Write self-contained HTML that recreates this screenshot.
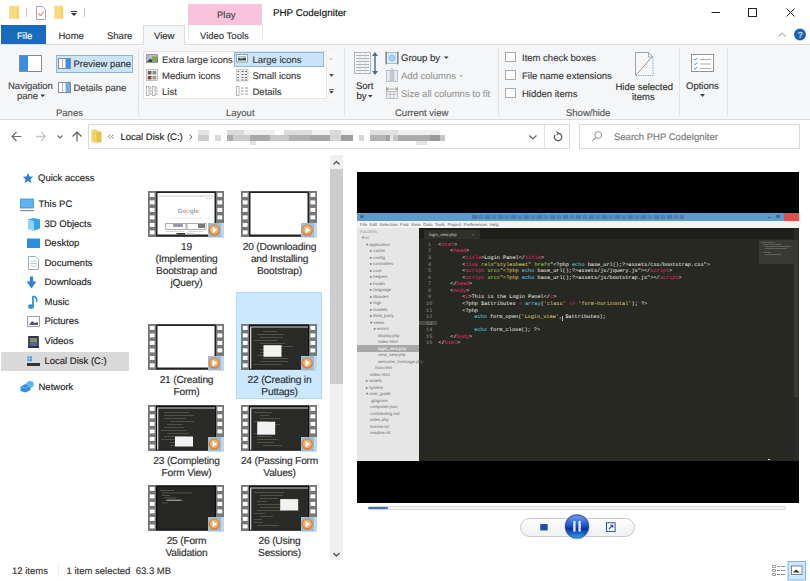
<!DOCTYPE html>
<html><head><meta charset="utf-8">
<style>
html,body{margin:0;padding:0;}
body{width:810px;height:581px;overflow:hidden;position:relative;background:#fff;font-family:"Liberation Sans",sans-serif;font-size:9.5px;color:#222;text-rendering:geometricPrecision;}
.a{position:absolute;}
.t{position:absolute;white-space:nowrap;line-height:12px;font-size:9.5px;color:#3a3a3a;-webkit-text-stroke:0.15px currentColor;margin-top:0.9px;}
.g{color:#9a9a9a;}
svg{position:absolute;overflow:visible;}
</style></head><body>

<!-- ===== Title bar ===== -->
<svg style="left:0;top:0" width="810" height="25">
  <!-- QAT folder 1 -->
  <rect x="9.2" y="5.8" width="10" height="13" fill="#f7db7c"/><path d="M17.5 9v9.8" stroke="#e9c860" stroke-width="1"/>
  <rect x="26" y="8" width="1" height="9" fill="#c8c8c8"/>
  <!-- doc with check -->
  <path d="M36.5 6.5h6l3 3v10h-9z" fill="#fff" stroke="#9a9aa8" stroke-width="0.9"/>
  <path d="M38.5 13.5l2 2 3.5-4" fill="none" stroke="#d88070" stroke-width="1.1"/>
  <rect x="54.3" y="5.8" width="9" height="13" fill="#f7db7c"/><path d="M62 9v9.8" stroke="#e9c860" stroke-width="1"/>
  <rect x="71" y="11" width="6" height="1" fill="#333"/><path d="M71 13h6l-3 3z" fill="#333"/>
  <rect x="84" y="8" width="1" height="9" fill="#c8c8c8"/>
  <!-- window controls -->
  <rect x="711.5" y="12" width="8.5" height="1" fill="#222"/>
  <rect x="748.5" y="8.5" width="8" height="8" fill="none" stroke="#222" stroke-width="1"/>
  <path d="M786.5 8.5l8 8M794.5 8.5l-8 8" stroke="#222" stroke-width="1"/>
</svg>
<div class="t" style="left:273px;top:7px;font-size:9.8px;color:#111">PHP CodeIgniter</div>

<!-- Play contextual header -->
<div class="a" style="left:188px;top:4px;width:74px;height:21px;background:#f8c4dc"></div>
<div class="t" style="left:217px;top:9px;color:#444">Play</div>
<div class="a" style="left:188px;top:25px;width:73px;height:14px;border-left:1px solid #f3e4ea;border-right:1px solid #f3e4ea;background:#fff"></div>

<!-- ===== Tabs ===== -->
<div class="a" style="left:1px;top:25px;width:45px;height:19px;background:#1a6bbd"></div>
<div class="t" style="left:17px;top:30px;color:#fff">File</div>
<div class="t" style="left:58.5px;top:30px;color:#333">Home</div>
<div class="t" style="left:107px;top:30px;color:#333">Share</div>
<div class="a" style="left:143px;top:25px;width:42px;height:20px;background:#f5f6f7;border:1px solid #dadbdc;border-bottom:none;box-sizing:border-box"></div>
<div class="t" style="left:154px;top:30px;color:#333">View</div>
<div class="t" style="left:200px;top:30px;color:#333">Video Tools</div>

<!-- chevron + help -->
<svg style="left:0;top:0" width="810" height="45">
  <path d="M778.5 36.5l3.5-3.5 3.5 3.5" fill="none" stroke="#b5b5b5" stroke-width="1.2"/>
  <circle cx="800" cy="34.5" r="5.9" fill="#1a62b0"/>
  <text x="800.2" y="38" font-family="Liberation Sans" font-weight="bold" font-size="9" fill="#bfe0ff" text-anchor="middle">?</text>
</svg>

<!-- ===== Ribbon ===== -->
<div class="a" style="left:0;top:44px;width:810px;height:76px;background:#f5f6f7;border-top:1px solid #dadbdc;border-bottom:1px solid #dadbdc;box-sizing:border-box"></div>
<!-- restore view tab bottom -->
<div class="a" style="left:144px;top:44px;width:40px;height:1px;background:#f5f6f7"></div>
<!-- separators -->
<div class="a" style="left:138px;top:48px;width:1px;height:68px;background:#e2e3e4"></div>
<div class="a" style="left:344px;top:48px;width:1px;height:68px;background:#e2e3e4"></div>
<div class="a" style="left:498px;top:48px;width:1px;height:68px;background:#e2e3e4"></div>
<div class="a" style="left:679px;top:48px;width:1px;height:68px;background:#e2e3e4"></div>
<div class="a" style="left:727px;top:48px;width:1px;height:68px;background:#e2e3e4"></div>

<!-- Panes group -->
<svg style="left:0;top:0" width="140" height="120">
  <rect x="19.5" y="55.5" width="22" height="16" fill="#fff" stroke="#8a8a8a"/>
  <rect x="20" y="56" width="8" height="15" fill="#3c8fdf"/>
  <rect x="56.5" y="55.5" width="76" height="17" fill="#cce4f7" stroke="#8db4da"/>
  <rect x="58.5" y="58.5" width="12" height="10" fill="#fff" stroke="#8a8a8a"/>
  <rect x="65.5" y="59" width="4.5" height="9" fill="#3c8fdf"/><path d="M62.5 59v9" stroke="#aaa" stroke-width="0.8"/>
  <rect x="58.5" y="82.5" width="12" height="10" fill="#fff" stroke="#8a8a8a"/>
  <rect x="65.5" y="83" width="4.5" height="9" fill="#6aaee8"/><path d="M62.5 83v9" stroke="#aaa" stroke-width="0.8"/>
  <path d="M40.5 94.5h4.5l-2.25 2.7z" fill="#333"/>
</svg>
<div class="t" style="left:8px;top:79.8px;color:#444">Navigation</div>
<div class="t" style="left:17px;top:90.3px;color:#444">pane</div>
<div class="t" style="left:73.5px;top:58px;color:#333">Preview pane</div>
<div class="t" style="left:73.5px;top:82px;color:#444">Details pane</div>
<div class="t" style="left:56px;top:106.8px;color:#555">Panes</div>

<!-- Layout group -->
<div class="a" style="left:143px;top:51px;width:193px;height:48px;background:#fff;border:1px solid #e3e4e5;box-sizing:border-box"></div>
<div class="a" style="left:325.5px;top:51px;width:10.5px;height:48px;background:#f8f8f8;border-left:1px solid #e7e7e7;box-sizing:border-box"></div>
<div class="a" style="left:233.5px;top:51.5px;width:90px;height:15px;background:#cce4f7;border:1px solid #8db4da;box-sizing:border-box"></div>
<svg style="left:0;top:0" width="345" height="120">
  <rect x="146.5" y="54.5" width="11" height="8" fill="#b9bccf" stroke="#8a8a8a" stroke-width="0.8"/>
  <path d="M147 62l3-3.5 3 2 4.5-3v4.5z" fill="#3f4a3a"/><rect x="152" y="56.5" width="5" height="5.5" fill="#7fa84a"/>
  <rect x="146.5" y="69.5" width="11" height="11" fill="#ececea" stroke="#aaa" stroke-width="0.7"/>
  <rect x="147.8" y="71" width="3.6" height="3.4" fill="#6a625a"/><rect x="152.6" y="71" width="3.6" height="3.4" fill="#8a8a80"/>
  <rect x="147.8" y="76" width="3.6" height="3.4" fill="#7a4a3a"/><rect x="152.6" y="76" width="3.6" height="3.4" fill="#9a9a88"/>
  <rect x="146.5" y="86.5" width="2.5" height="9" fill="none" stroke="#999" stroke-width="0.7"/>
  <rect x="152.5" y="86.5" width="2.5" height="9" fill="none" stroke="#999" stroke-width="0.7"/>
  <path d="M149.5 88h2M149.5 91h2M149.5 94h2M155.5 88h2M155.5 91h2M155.5 94h2" stroke="#777" stroke-width="0.8"/>
  <rect x="236.5" y="54.5" width="11" height="7.5" fill="#fff" stroke="#8a8a8a" stroke-width="0.8"/>
  <path d="M238 60.5v-3l3 1 5-1v3z" fill="#2f4f5a"/><rect x="238" y="56" width="8" height="1.5" fill="#9fc0d0"/>
  <rect x="236.5" y="69.5" width="11.5" height="11.5" fill="#f0f0f0" stroke="#b0b0b0" stroke-width="0.6"/>
  <path d="M237.5 71.5h1.5M241.5 71.5h2M245 71.5h2M237.5 74.5h1.5M241.5 74.5h2M245 74.5h2M237.5 77.5h1.5M241.5 77.5h2M245 77.5h2M237.5 80h1.5M241.5 80h2M245 80h2" stroke="#666" stroke-width="1.1"/>
  <rect x="236.5" y="86.5" width="2.5" height="9" fill="none" stroke="#999" stroke-width="0.7"/>
  <path d="M241 88h2.5M245 88h3M241 91h2.5M245 91h3M241 94h2.5M245 94h3" stroke="#777" stroke-width="0.8"/>
  <rect x="329" y="58.5" width="4" height="1" fill="#bbb"/>
  <path d="M329.2 74h4.6l-2.3 2.8z" fill="#444"/>
  <rect x="329.2" y="89" width="4.6" height="0.9" fill="#444"/><path d="M329.2 91h4.6l-2.3 2.8z" fill="#444"/>
</svg>
<div class="t" style="left:162px;top:53.8px">Extra large icons</div>
<div class="t" style="left:162px;top:69.8px">Medium icons</div>
<div class="t" style="left:162px;top:86px">List</div>
<div class="t" style="left:252.5px;top:53.8px">Large icons</div>
<div class="t" style="left:252.5px;top:69.8px">Small icons</div>
<div class="t" style="left:252.5px;top:86px">Details</div>
<div class="t" style="left:226px;top:106.8px;color:#555">Layout</div>

<!-- Current view group -->
<svg style="left:0;top:0" width="500" height="120">
  <rect x="354.5" y="52.5" width="16" height="21" fill="#f4f6f8" stroke="#9aa" stroke-width="0.8"/>
  <path d="M356 55.5h13M356 58.5h13M356 61.5h13M356 64.5h13M356 67.5h13M356 70.5h13" stroke="#8c949a" stroke-width="0.7"/>
  <path d="M360 53v20M365 53v20" stroke="#c8cdd2" stroke-width="0.6"/>
  <path d="M375 54v19" stroke="#3d6f8f" stroke-width="1.4"/>
  <path d="M372 56l3-4 3 4zM372 71l3 4 3-4z" fill="#3d6f8f"/>
  <path d="M368 95h4.5l-2.25 2.6z" fill="#333"/>
  <rect x="386.5" y="52.5" width="11" height="11" fill="#d5e8f8" stroke="#9aa" stroke-width="0.7"/>
  <circle cx="392" cy="58" r="3" fill="#a9d0f0" stroke="#7fb3de" stroke-width="0.6"/>
  <path d="M386 51.5v13M398 51.5v13" stroke="#555" stroke-width="0.9"/>
  <rect x="386.5" y="70.5" width="11" height="11" fill="#e8ecf0" stroke="#aab" stroke-width="0.7"/>
  <path d="M390.2 70.5v11M393.8 70.5v11" stroke="#aab" stroke-width="0.7"/>
  <rect x="390.5" y="71" width="3" height="10" fill="#c0c8d0"/>
  <path d="M392 68v2" stroke="#999" stroke-width="0.8"/>
  <rect x="386.5" y="91.5" width="11" height="7" fill="#eef0f3" stroke="#aab" stroke-width="0.7"/>
  <path d="M386.5 94.5h11M390.2 91.5v7M393.8 91.5v7" stroke="#aab" stroke-width="0.6"/>
  <path d="M387 89h10M388.5 87.5l-1.5 1.5 1.5 1.5M395.5 87.5l1.5 1.5-1.5 1.5M386.5 87v4M397.5 87v4" fill="none" stroke="#777" stroke-width="0.6"/>
  <path d="M444 56.5h4.5l-2.25 2.6z" fill="#333"/>
  <path d="M459 75h4l-2 2.4z" fill="#bbb"/>
</svg>
<div class="t" style="left:356px;top:79.8px;color:#333">Sort</div>
<div class="t" style="left:356.5px;top:90.3px;color:#333">by</div>
<div class="t" style="left:401px;top:52.3px;color:#333">Group by</div>
<div class="t g" style="left:401px;top:70px">Add columns</div>
<div class="t g" style="left:401px;top:88.2px">Size all columns to fit</div>
<div class="t" style="left:395px;top:106.8px;color:#555">Current view</div>

<!-- Show/hide group -->
<div class="a" style="left:505px;top:52px;width:11px;height:10.3px;border:1px solid #aaa;background:#fff;box-sizing:border-box"></div>
<div class="a" style="left:505px;top:70px;width:11px;height:10.3px;border:1px solid #aaa;background:#fff;box-sizing:border-box"></div>
<div class="a" style="left:505px;top:87.8px;width:11px;height:10.3px;border:1px solid #aaa;background:#fff;box-sizing:border-box"></div>
<div class="t" style="left:522px;top:52.3px">Item check boxes</div>
<div class="t" style="left:522px;top:70px">File name extensions</div>
<div class="t" style="left:522px;top:88.2px">Hidden items</div>
<svg style="left:0;top:0" width="680" height="120">
  <path d="M635.5 75.5v-23h13l4.5 4.5" fill="none" stroke="#999" stroke-width="0.9"/>
  <path d="M648.5 52.5v4.5h4.5" fill="none" stroke="#999" stroke-width="0.8"/>
  <path d="M636 75l16.5-18.5" stroke="#8a8a8a" stroke-width="0.9"/>
  <path d="M653 58v17.5h-17" fill="none" stroke="#5aa7e0" stroke-width="1" stroke-dasharray="1.3 1.1"/>
</svg>
<div class="t" style="left:615.5px;top:80.8px;color:#333">Hide selected</div>
<div class="t" style="left:632px;top:90.8px;color:#333">items</div>
<div class="t" style="left:566px;top:106.8px;color:#555">Show/hide</div>

<!-- Options group -->
<svg style="left:0;top:0" width="730" height="120">
  <rect x="691.5" y="54.5" width="22" height="17" fill="#fff" stroke="#888" stroke-width="0.9"/>
  <path d="M694 59l1.2 1.2 2-2.2M694 63.5l1.2 1.2 2-2.2M694 68l1.2 1.2 2-2.2" fill="none" stroke="#2f7fd0" stroke-width="0.9"/>
  <path d="M700 59.5h11M700 64h11M700 68.5h11" stroke="#999" stroke-width="0.8"/>
  <path d="M700 94h5l-2.5 3z" fill="#444"/>
</svg>
<div class="t" style="left:686px;top:80.3px;color:#333">Options</div>

<!-- ADDRESS_ROW -->
<svg style="left:0;top:0" width="810" height="155">
  <path d="M12 136.5h9.5M16.5 132l-4.5 4.5 4.5 4.5" fill="none" stroke="#6a6a6a" stroke-width="1.15"/>
  <path d="M36 136.5h9.5M41 132l4.5 4.5-4.5 4.5" fill="none" stroke="#c8c8c8" stroke-width="1.3"/>
  <path d="M57.5 135.5l2.5 2.5 2.5-2.5" fill="none" stroke="#666" stroke-width="1.1"/>
  <path d="M77 141.5v-9.5M72.5 136.5l4.5-4.5 4.5 4.5" fill="none" stroke="#5a5a5a" stroke-width="1.15"/>
  <rect x="88.5" y="124.5" width="481" height="24" fill="#fff" stroke="#d9d9d9"/>
  <path d="M91.5 129.5h5l1 1v12h-6z" fill="#f3d46a"/><path d="M96.5 131.5h5v11h-5z" fill="#e8c250"/>
  <path d="M110.5 134.5l-2 2 2 2M113.5 134.5l-2 2 2 2" fill="none" stroke="#777" stroke-width="0.9"/>
  <path d="M189.5 134.5l2.5 2.5-2.5 2.5" fill="none" stroke="#666" stroke-width="1"/>
  <path d="M529.3 135.5l3.6 3.4 3.6-3.4" fill="none" stroke="#666" stroke-width="1.3"/>
  <rect x="544" y="125" width="1" height="23" fill="#e3e3e3"/>
  <path d="M555.2 134.6a3.7 3.7 0 1 0 3.2 -1.3" fill="none" stroke="#555" stroke-width="1.25"/>
  <path d="M556.3 131.6l2.3 1.6-1.9 2" fill="none" stroke="#555" stroke-width="1.1"/>
  <rect x="579.5" y="124.5" width="220" height="24" fill="#fff" stroke="#d9d9d9"/>
  <circle cx="598.3" cy="135" r="3.4" fill="none" stroke="#8a8a8a" stroke-width="0.95"/>
  <path d="M595.9 137.5l-3.4 3.4" stroke="#8a8a8a" stroke-width="1.05"/>
</svg>
<div class="t" style="left:120.5px;top:131px;color:#222">Local Disk (C:)</div>

<div class="t" style="left:614px;top:131px;color:#777">Search PHP CodeIgniter</div>
<!-- blurred path -->
<div class="a" style="left:0;top:0;filter:blur(0.6px)"><div class="a" style="left:198px;top:129.5px;width:11.0px;height:5.5px;background:#e4e4e4"></div><div class="a" style="left:198px;top:135px;width:11.0px;height:5.6px;background:#cdcdcd"></div><div class="a" style="left:215px;top:135px;width:6.0px;height:5.6px;background:#dadada"></div><div class="a" style="left:226.5px;top:129.5px;width:17.5px;height:5.5px;background:#dadada"></div><div class="a" style="left:244px;top:129.5px;width:31.0px;height:5.5px;background:#efefef"></div><div class="a" style="left:226.5px;top:135px;width:6.0px;height:5.6px;background:#acacac"></div><div class="a" style="left:232.5px;top:135px;width:17.5px;height:5.6px;background:#cbcbcb"></div><div class="a" style="left:250px;top:135px;width:20.0px;height:5.6px;background:#a9a9a9"></div><div class="a" style="left:270px;top:135px;width:18.8px;height:5.6px;background:#c8c8c8"></div><div class="a" style="left:250px;top:140.6px;width:6.0px;height:4.4px;background:#e2e2e2"></div><div class="a" style="left:284px;top:129.5px;width:28.0px;height:5.5px;background:#dcdcdc"></div><div class="a" style="left:312px;top:129.5px;width:18.0px;height:5.5px;background:#f0f0f0"></div><div class="a" style="left:330px;top:129.5px;width:11.0px;height:5.5px;background:#dadada"></div><div class="a" style="left:341px;top:129.5px;width:11.5px;height:5.5px;background:#f2f2f2"></div><div class="a" style="left:288.8px;top:135px;width:21.2px;height:5.6px;background:#b0b0b0"></div><div class="a" style="left:310px;top:135px;width:20.0px;height:5.6px;background:#a6a6a6"></div><div class="a" style="left:330px;top:135px;width:11.0px;height:5.6px;background:#d6d6d6"></div><div class="a" style="left:341px;top:135px;width:11.5px;height:5.6px;background:#9f9f9f"></div><div class="a" style="left:358.5px;top:134.8px;width:5.5px;height:5.9px;background:#d6d6d6"></div><div class="a" style="left:369.7px;top:129.5px;width:28.3px;height:5.3px;background:#e0e0e0"></div><div class="a" style="left:398px;top:129.5px;width:42.0px;height:5.3px;background:#efefef"></div><div class="a" style="left:369.7px;top:134.8px;width:16.3px;height:5.9px;background:#b3b3b3"></div><div class="a" style="left:386px;top:134.8px;width:4.0px;height:5.9px;background:#a3a3a3"></div><div class="a" style="left:390px;top:134.8px;width:3.0px;height:5.9px;background:#e6e6e6"></div><div class="a" style="left:393px;top:134.8px;width:5.0px;height:5.9px;background:#c6c6c6"></div><div class="a" style="left:398px;top:134.8px;width:32.0px;height:5.9px;background:#acacac"></div><div class="a" style="left:430px;top:134.8px;width:10.0px;height:5.9px;background:#9a9a9a"></div><div class="a" style="left:440px;top:134.8px;width:5.0px;height:5.9px;background:#c4c4c4"></div><div class="a" style="left:416px;top:140.7px;width:10.5px;height:4.3px;background:#e4e4e4"></div></div>

<!-- NAV_PANE -->
<div class="a" style="left:1px;top:351.5px;width:128px;height:19.5px;background:#d9d9d9"></div>
<svg style="left:0;top:0" width="135" height="400">
  <!-- star -->
  <path d="M28 173l1.6 3.4 3.6.4-2.7 2.5.8 3.6L28 181l-3.3 1.9.8-3.6-2.7-2.5 3.6-.4z" fill="#2f83d6"/>
  <!-- This PC -->
  <rect x="20.5" y="199" width="13" height="9" fill="#5fb2ee" stroke="#3a8fd4" stroke-width="0.8"/>
  <rect x="20" y="210" width="14" height="1.2" fill="#8a8a8a"/>
  <!-- 3D objects -->
  <path d="M28 219.5l6 -1.5 6 1.5v9l-6 2-6-2z" fill="#31a6e0"/><path d="M28 219.5l6 1.5v10l-6-2z" fill="#8fd3f4"/>
  <!-- desktop -->
  <rect x="27" y="238.5" width="13" height="9.5" fill="#2b8ee0"/>
  <!-- documents -->
  <path d="M28.5 256.5h7l3 3v10h-10z" fill="#fff" stroke="#8a9aa8" stroke-width="0.8"/>
  <path d="M30.5 261h6M30.5 263.5h6M30.5 266h6" stroke="#9bb" stroke-width="0.7"/>
  <!-- downloads -->
  <path d="M31.5 276.5v7" stroke="#2f83d6" stroke-width="3.2"/><path d="M26.5 281.5h10l-5 7z" fill="#2f83d6"/>
  <!-- music -->
  <path d="M33 296v10" stroke="#2f8fe0" stroke-width="1.8"/><ellipse cx="31" cy="306.5" rx="3" ry="2.3" fill="#2f8fe0"/>
  <path d="M33.5 296c2 1 4 3 3 6" fill="none" stroke="#2f8fe0" stroke-width="1.5"/>
  <!-- pictures -->
  <rect x="27.5" y="316.5" width="12" height="10" fill="#fff" stroke="#888" stroke-width="0.8"/>
  <path d="M29 325l3-4 3 2 3-1v3z" fill="#557"/>
  <!-- videos -->
  <rect x="28" y="336" width="11" height="12" fill="#2e3440"/><rect x="30" y="338" width="7" height="4" fill="#7a9070"/><rect x="30" y="342" width="7" height="4" fill="#4f6a90"/><path d="M28.8 336.5v10M38.2 336.5v10" stroke="#9aa" stroke-width="0.8" stroke-dasharray="1 1"/>
  <!-- local disk -->
  <rect x="27" y="363" width="13" height="3" fill="#333"/>
  <rect x="27.5" y="356.3" width="2" height="2.2" fill="#3a9be8"/><rect x="30" y="356.3" width="2" height="2.2" fill="#3a9be8"/><rect x="27.5" y="359.1" width="2" height="2.2" fill="#3a9be8"/><rect x="30" y="359.1" width="2" height="2.2" fill="#3a9be8"/>
  <!-- network -->
  <path d="M20.5 386.5l5-2.5 5 1.5v4.5l-5 2.5-5-1.5z" fill="#2f8fe0"/><path d="M26 383l4-2.2 3.5 1.2v4.5l-3 1.5" fill="#5ab4f2"/><path d="M20.5 386.5l5 1.5 5-2.5" fill="none" stroke="#8ccdf7" stroke-width="0.7"/>
</svg>
<div class="t" style="left:38px;top:172px;color:#1e1e1e">Quick access</div>
<div class="t" style="left:38.5px;top:198px;color:#1e1e1e">This PC</div>
<div class="t" style="left:44.5px;top:218px;color:#1e1e1e">3D Objects</div>
<div class="t" style="left:44.5px;top:237.5px;color:#1e1e1e">Desktop</div>
<div class="t" style="left:44.5px;top:257px;color:#1e1e1e">Documents</div>
<div class="t" style="left:44.5px;top:276.5px;color:#1e1e1e">Downloads</div>
<div class="t" style="left:44.5px;top:296px;color:#1e1e1e">Music</div>
<div class="t" style="left:44.5px;top:315.5px;color:#1e1e1e">Pictures</div>
<div class="t" style="left:44.5px;top:335.5px;color:#1e1e1e">Videos</div>
<div class="t" style="left:44.5px;top:355.5px;color:#1e1e1e">Local Disk (C:)</div>
<div class="t" style="left:38.5px;top:381px;color:#1e1e1e">Network</div>

<div class="a" style="left:235.5px;top:291.5px;width:86.5px;height:107.5px;background:#cce8ff;border:1px solid #b0d8f8;box-sizing:border-box"></div>
<svg style="left:147.5px;top:190.5px" width="76" height="48"><rect x="0" y="0" width="76" height="46" fill="#777777"/><rect x="1.8" y="1.9" width="4.8" height="4" fill="#fff"/><rect x="69.4" y="1.9" width="4.8" height="4" fill="#fff"/><rect x="1.8" y="9.4" width="4.8" height="4" fill="#fff"/><rect x="69.4" y="9.4" width="4.8" height="4" fill="#fff"/><rect x="1.8" y="16.9" width="4.8" height="4" fill="#fff"/><rect x="69.4" y="16.9" width="4.8" height="4" fill="#fff"/><rect x="1.8" y="24.4" width="4.8" height="4" fill="#fff"/><rect x="69.4" y="24.4" width="4.8" height="4" fill="#fff"/><rect x="1.8" y="31.9" width="4.8" height="4" fill="#fff"/><rect x="69.4" y="31.9" width="4.8" height="4" fill="#fff"/><rect x="1.8" y="39.4" width="4.8" height="4" fill="#fff"/><rect x="69.4" y="39.4" width="4.8" height="4" fill="#fff"/><rect x="8" y="0.5" width="60" height="45" fill="#222"/><rect x="9.5" y="2" width="57" height="41.5" fill="#fff"/><rect x="11" y="4.5" width="54" height="1.3" fill="#d8d8d8"/><rect x="58" y="7" width="6" height="1" fill="#ddd"/><text x="29.5" y="22.3" font-family="Liberation Sans" font-size="6.2" font-weight="bold" opacity="0.75"><tspan fill="#4a7fd8">G</tspan><tspan fill="#e05a4a">o</tspan><tspan fill="#e9b83a">o</tspan><tspan fill="#4a7fd8">g</tspan><tspan fill="#3ea35a">l</tspan><tspan fill="#e05a4a">e</tspan></text><rect x="23" y="26.5" width="32" height="1" fill="#eee"/><rect x="17.8" y="32.4" width="20.2" height="6.2" fill="#fff" stroke="#777" stroke-width="0.6"/><rect x="39" y="32.4" width="19" height="6.2" fill="#fff" stroke="#777" stroke-width="0.6"/><rect x="25" y="33" width="10" height="3" fill="#9a9aa8"/><rect x="50" y="33" width="7" height="4" fill="#777"/><rect x="18" y="40" width="18" height="0.8" fill="#ccc"/><rect x="40" y="40" width="16" height="0.8" fill="#ccc"/><rect x="28.5" y="42" width="8.5" height="1.5" fill="#333"/><rect x="38" y="42" width="8" height="1.5" fill="#bcd"/><rect x="60" y="32" width="16" height="14.5" fill="#9fbcd2"/><rect x="73" y="32" width="3" height="14.5" fill="#bcd8ee"/><circle cx="66.3" cy="39.2" r="5.6" fill="#d9833a"/><circle cx="66.3" cy="38.8" r="4.3" fill="#f2b070"/><path d="M64.6 36l4.6 3.1-4.6 3.1z" fill="#fff"/></svg>
<div class="t lab" style="left:136.5px;top:240.9px;width:100px;text-align:center;font-size:10.2px;letter-spacing:-0.2px;color:#2e2e2e">19</div>
<div class="t lab" style="left:136.5px;top:253.1px;width:100px;text-align:center;font-size:10.2px;letter-spacing:-0.2px;color:#2e2e2e">(Implementing</div>
<div class="t lab" style="left:136.5px;top:265.3px;width:100px;text-align:center;font-size:10.2px;letter-spacing:-0.2px;color:#2e2e2e">Bootstrap and</div>
<div class="t lab" style="left:136.5px;top:277.5px;width:100px;text-align:center;font-size:10.2px;letter-spacing:-0.2px;color:#2e2e2e">jQuery)</div>
<svg style="left:240.5px;top:190.5px" width="76" height="48"><rect x="0" y="0" width="76" height="46" fill="#777777"/><rect x="1.8" y="1.9" width="4.8" height="4" fill="#fff"/><rect x="69.4" y="1.9" width="4.8" height="4" fill="#fff"/><rect x="1.8" y="9.4" width="4.8" height="4" fill="#fff"/><rect x="69.4" y="9.4" width="4.8" height="4" fill="#fff"/><rect x="1.8" y="16.9" width="4.8" height="4" fill="#fff"/><rect x="69.4" y="16.9" width="4.8" height="4" fill="#fff"/><rect x="1.8" y="24.4" width="4.8" height="4" fill="#fff"/><rect x="69.4" y="24.4" width="4.8" height="4" fill="#fff"/><rect x="1.8" y="31.9" width="4.8" height="4" fill="#fff"/><rect x="69.4" y="31.9" width="4.8" height="4" fill="#fff"/><rect x="1.8" y="39.4" width="4.8" height="4" fill="#fff"/><rect x="69.4" y="39.4" width="4.8" height="4" fill="#fff"/><rect x="8" y="0.5" width="60" height="45" fill="#222"/><rect x="9.5" y="2" width="57" height="41.5" fill="#fff"/><rect x="60" y="32" width="16" height="14.5" fill="#9fbcd2"/><rect x="73" y="32" width="3" height="14.5" fill="#bcd8ee"/><circle cx="66.3" cy="39.2" r="5.6" fill="#d9833a"/><circle cx="66.3" cy="38.8" r="4.3" fill="#f2b070"/><path d="M64.6 36l4.6 3.1-4.6 3.1z" fill="#fff"/></svg>
<div class="t lab" style="left:229.5px;top:240.9px;width:100px;text-align:center;font-size:10.2px;letter-spacing:-0.2px;color:#2e2e2e">20 (Downloading</div>
<div class="t lab" style="left:229.5px;top:253.1px;width:100px;text-align:center;font-size:10.2px;letter-spacing:-0.2px;color:#2e2e2e">and Installing</div>
<div class="t lab" style="left:229.5px;top:265.3px;width:100px;text-align:center;font-size:10.2px;letter-spacing:-0.2px;color:#2e2e2e">Bootstrap)</div>
<svg style="left:147.5px;top:323.5px" width="76" height="48"><rect x="0" y="0" width="76" height="46" fill="#777777"/><rect x="1.8" y="1.9" width="4.8" height="4" fill="#fff"/><rect x="69.4" y="1.9" width="4.8" height="4" fill="#fff"/><rect x="1.8" y="9.4" width="4.8" height="4" fill="#fff"/><rect x="69.4" y="9.4" width="4.8" height="4" fill="#fff"/><rect x="1.8" y="16.9" width="4.8" height="4" fill="#fff"/><rect x="69.4" y="16.9" width="4.8" height="4" fill="#fff"/><rect x="1.8" y="24.4" width="4.8" height="4" fill="#fff"/><rect x="69.4" y="24.4" width="4.8" height="4" fill="#fff"/><rect x="1.8" y="31.9" width="4.8" height="4" fill="#fff"/><rect x="69.4" y="31.9" width="4.8" height="4" fill="#fff"/><rect x="1.8" y="39.4" width="4.8" height="4" fill="#fff"/><rect x="69.4" y="39.4" width="4.8" height="4" fill="#fff"/><rect x="8" y="0.5" width="60" height="45" fill="#222"/><rect x="9.5" y="2" width="57" height="41.5" fill="#fff"/><rect x="60" y="32" width="16" height="14.5" fill="#9fbcd2"/><rect x="73" y="32" width="3" height="14.5" fill="#bcd8ee"/><circle cx="66.3" cy="39.2" r="5.6" fill="#d9833a"/><circle cx="66.3" cy="38.8" r="4.3" fill="#f2b070"/><path d="M64.6 36l4.6 3.1-4.6 3.1z" fill="#fff"/></svg>
<div class="t lab" style="left:136.5px;top:373.9px;width:100px;text-align:center;font-size:10.2px;letter-spacing:-0.2px;color:#2e2e2e">21 (Creating</div>
<div class="t lab" style="left:136.5px;top:386.1px;width:100px;text-align:center;font-size:10.2px;letter-spacing:-0.2px;color:#2e2e2e">Form)</div>
<svg style="left:240.5px;top:323.5px" width="76" height="48"><rect x="0" y="0" width="76" height="46" fill="#777777"/><rect x="1.8" y="1.9" width="4.8" height="4" fill="#fff"/><rect x="69.4" y="1.9" width="4.8" height="4" fill="#fff"/><rect x="1.8" y="9.4" width="4.8" height="4" fill="#fff"/><rect x="69.4" y="9.4" width="4.8" height="4" fill="#fff"/><rect x="1.8" y="16.9" width="4.8" height="4" fill="#fff"/><rect x="69.4" y="16.9" width="4.8" height="4" fill="#fff"/><rect x="1.8" y="24.4" width="4.8" height="4" fill="#fff"/><rect x="69.4" y="24.4" width="4.8" height="4" fill="#fff"/><rect x="1.8" y="31.9" width="4.8" height="4" fill="#fff"/><rect x="69.4" y="31.9" width="4.8" height="4" fill="#fff"/><rect x="1.8" y="39.4" width="4.8" height="4" fill="#fff"/><rect x="69.4" y="39.4" width="4.8" height="4" fill="#fff"/><rect x="8" y="0.5" width="60" height="45" fill="#111"/><rect x="9" y="2.5" width="58" height="1.2" fill="#ddd"/><rect x="9" y="3.7" width="1.6" height="41" fill="#cfcfcf"/><rect x="10.6" y="3.7" width="56.4" height="41" fill="#2a2a27"/><rect x="22" y="7" width="14" height="0.9" fill="#55544c"/><rect x="16" y="10" width="27" height="0.9" fill="#55544c"/><rect x="19" y="13" width="23" height="0.9" fill="#55544c"/><rect x="13" y="16" width="23" height="0.9" fill="#55544c"/><rect x="19" y="19" width="25" height="0.9" fill="#55544c"/><rect x="22" y="22" width="30" height="0.9" fill="#55544c"/><rect x="19" y="25" width="12" height="0.9" fill="#55544c"/><rect x="19" y="28" width="18" height="0.9" fill="#55544c"/><rect x="16" y="31" width="25" height="0.9" fill="#55544c"/><rect x="22" y="34" width="25" height="0.9" fill="#55544c"/><rect x="19" y="37" width="28" height="0.9" fill="#55544c"/><rect x="13" y="40" width="28" height="0.9" fill="#55544c"/><rect x="22.5" y="21.2" width="18" height="11.6" fill="#f2f2f2"/><rect x="60" y="32" width="16" height="14.5" fill="#9fbcd2"/><rect x="73" y="32" width="3" height="14.5" fill="#bcd8ee"/><circle cx="66.3" cy="39.2" r="5.6" fill="#d9833a"/><circle cx="66.3" cy="38.8" r="4.3" fill="#f2b070"/><path d="M64.6 36l4.6 3.1-4.6 3.1z" fill="#fff"/></svg>
<div class="t lab" style="left:229.5px;top:373.9px;width:100px;text-align:center;font-size:10.2px;letter-spacing:-0.2px;color:#2e2e2e">22 (Creating in</div>
<div class="t lab" style="left:229.5px;top:386.1px;width:100px;text-align:center;font-size:10.2px;letter-spacing:-0.2px;color:#2e2e2e">Puttags)</div>
<svg style="left:147.5px;top:404.5px" width="76" height="48"><rect x="0" y="0" width="76" height="46" fill="#777777"/><rect x="1.8" y="1.9" width="4.8" height="4" fill="#fff"/><rect x="69.4" y="1.9" width="4.8" height="4" fill="#fff"/><rect x="1.8" y="9.4" width="4.8" height="4" fill="#fff"/><rect x="69.4" y="9.4" width="4.8" height="4" fill="#fff"/><rect x="1.8" y="16.9" width="4.8" height="4" fill="#fff"/><rect x="69.4" y="16.9" width="4.8" height="4" fill="#fff"/><rect x="1.8" y="24.4" width="4.8" height="4" fill="#fff"/><rect x="69.4" y="24.4" width="4.8" height="4" fill="#fff"/><rect x="1.8" y="31.9" width="4.8" height="4" fill="#fff"/><rect x="69.4" y="31.9" width="4.8" height="4" fill="#fff"/><rect x="1.8" y="39.4" width="4.8" height="4" fill="#fff"/><rect x="69.4" y="39.4" width="4.8" height="4" fill="#fff"/><rect x="8" y="0.5" width="60" height="45" fill="#111"/><rect x="9" y="2.5" width="58" height="1.2" fill="#ddd"/><rect x="9" y="3.7" width="1.6" height="41" fill="#cfcfcf"/><rect x="10.6" y="3.7" width="56.4" height="41" fill="#2a2a27"/><rect x="16" y="7" width="25" height="0.9" fill="#55544c"/><rect x="16" y="10" width="30" height="0.9" fill="#55544c"/><rect x="16" y="13" width="22" height="0.9" fill="#55544c"/><rect x="22" y="16" width="24" height="0.9" fill="#55544c"/><rect x="19" y="19" width="16" height="0.9" fill="#55544c"/><rect x="16" y="22" width="20" height="0.9" fill="#55544c"/><rect x="13" y="25" width="25" height="0.9" fill="#55544c"/><rect x="19" y="28" width="22" height="0.9" fill="#55544c"/><rect x="16" y="31" width="22" height="0.9" fill="#55544c"/><rect x="13" y="34" width="14" height="0.9" fill="#55544c"/><rect x="22" y="37" width="22" height="0.9" fill="#55544c"/><rect x="22" y="40" width="16" height="0.9" fill="#55544c"/><rect x="27" y="31.5" width="18" height="10" fill="#f2f2f2"/><rect x="60" y="32" width="16" height="14.5" fill="#9fbcd2"/><rect x="73" y="32" width="3" height="14.5" fill="#bcd8ee"/><circle cx="66.3" cy="39.2" r="5.6" fill="#d9833a"/><circle cx="66.3" cy="38.8" r="4.3" fill="#f2b070"/><path d="M64.6 36l4.6 3.1-4.6 3.1z" fill="#fff"/></svg>
<div class="t lab" style="left:136.5px;top:454.9px;width:100px;text-align:center;font-size:10.2px;letter-spacing:-0.2px;color:#2e2e2e">23 (Completing</div>
<div class="t lab" style="left:136.5px;top:467.1px;width:100px;text-align:center;font-size:10.2px;letter-spacing:-0.2px;color:#2e2e2e">Form View)</div>
<svg style="left:240.5px;top:404.5px" width="76" height="48"><rect x="0" y="0" width="76" height="46" fill="#777777"/><rect x="1.8" y="1.9" width="4.8" height="4" fill="#fff"/><rect x="69.4" y="1.9" width="4.8" height="4" fill="#fff"/><rect x="1.8" y="9.4" width="4.8" height="4" fill="#fff"/><rect x="69.4" y="9.4" width="4.8" height="4" fill="#fff"/><rect x="1.8" y="16.9" width="4.8" height="4" fill="#fff"/><rect x="69.4" y="16.9" width="4.8" height="4" fill="#fff"/><rect x="1.8" y="24.4" width="4.8" height="4" fill="#fff"/><rect x="69.4" y="24.4" width="4.8" height="4" fill="#fff"/><rect x="1.8" y="31.9" width="4.8" height="4" fill="#fff"/><rect x="69.4" y="31.9" width="4.8" height="4" fill="#fff"/><rect x="1.8" y="39.4" width="4.8" height="4" fill="#fff"/><rect x="69.4" y="39.4" width="4.8" height="4" fill="#fff"/><rect x="8" y="0.5" width="60" height="45" fill="#111"/><rect x="9" y="2.5" width="58" height="1.2" fill="#ddd"/><rect x="9" y="3.7" width="1.6" height="41" fill="#cfcfcf"/><rect x="10.6" y="3.7" width="56.4" height="41" fill="#2a2a27"/><rect x="13" y="7" width="18" height="0.9" fill="#55544c"/><rect x="19" y="10" width="9" height="0.9" fill="#55544c"/><rect x="19" y="13" width="20" height="0.9" fill="#55544c"/><rect x="13" y="16" width="14" height="0.9" fill="#55544c"/><rect x="19" y="19" width="20" height="0.9" fill="#55544c"/><rect x="16" y="22" width="9" height="0.9" fill="#55544c"/><rect x="22" y="25" width="10" height="0.9" fill="#55544c"/><rect x="13" y="28" width="14" height="0.9" fill="#55544c"/><rect x="16" y="31" width="15" height="0.9" fill="#55544c"/><rect x="16" y="34" width="21" height="0.9" fill="#55544c"/><rect x="16" y="37" width="17" height="0.9" fill="#55544c"/><rect x="22" y="40" width="19" height="0.9" fill="#55544c"/><rect x="16.2" y="16.7" width="18" height="13" fill="#f2f2f2"/><rect x="60" y="32" width="16" height="14.5" fill="#9fbcd2"/><rect x="73" y="32" width="3" height="14.5" fill="#bcd8ee"/><circle cx="66.3" cy="39.2" r="5.6" fill="#d9833a"/><circle cx="66.3" cy="38.8" r="4.3" fill="#f2b070"/><path d="M64.6 36l4.6 3.1-4.6 3.1z" fill="#fff"/></svg>
<div class="t lab" style="left:229.5px;top:454.9px;width:100px;text-align:center;font-size:10.2px;letter-spacing:-0.2px;color:#2e2e2e">24 (Passing Form</div>
<div class="t lab" style="left:229.5px;top:467.1px;width:100px;text-align:center;font-size:10.2px;letter-spacing:-0.2px;color:#2e2e2e">Values)</div>
<svg style="left:147.5px;top:484.5px" width="76" height="48"><rect x="0" y="0" width="76" height="46" fill="#777777"/><rect x="1.8" y="1.9" width="4.8" height="4" fill="#fff"/><rect x="69.4" y="1.9" width="4.8" height="4" fill="#fff"/><rect x="1.8" y="9.4" width="4.8" height="4" fill="#fff"/><rect x="69.4" y="9.4" width="4.8" height="4" fill="#fff"/><rect x="1.8" y="16.9" width="4.8" height="4" fill="#fff"/><rect x="69.4" y="16.9" width="4.8" height="4" fill="#fff"/><rect x="1.8" y="24.4" width="4.8" height="4" fill="#fff"/><rect x="69.4" y="24.4" width="4.8" height="4" fill="#fff"/><rect x="1.8" y="31.9" width="4.8" height="4" fill="#fff"/><rect x="69.4" y="31.9" width="4.8" height="4" fill="#fff"/><rect x="1.8" y="39.4" width="4.8" height="4" fill="#fff"/><rect x="69.4" y="39.4" width="4.8" height="4" fill="#fff"/><rect x="8" y="0.5" width="60" height="45" fill="#111"/><rect x="9.5" y="2" width="57" height="42.5" fill="#262624"/><rect x="12" y="5" width="14" height="0.9" fill="#5a5952"/><rect x="14" y="7.5" width="30" height="0.9" fill="#5a5952"/><rect x="14" y="10" width="8" height="0.9" fill="#5a5952"/><rect x="16" y="12.5" width="12" height="0.9" fill="#5a5952"/><rect x="17" y="15" width="18" height="0.9" fill="#5a5952"/><rect x="14" y="17.5" width="6" height="0.9" fill="#5a5952"/><rect x="19" y="14.6" width="14" height="1.3" fill="#9a9a90"/><rect x="60" y="32" width="16" height="14.5" fill="#9fbcd2"/><rect x="73" y="32" width="3" height="14.5" fill="#bcd8ee"/><circle cx="66.3" cy="39.2" r="5.6" fill="#d9833a"/><circle cx="66.3" cy="38.8" r="4.3" fill="#f2b070"/><path d="M64.6 36l4.6 3.1-4.6 3.1z" fill="#fff"/></svg>
<div class="t lab" style="left:136.5px;top:534.9px;width:100px;text-align:center;font-size:10.2px;letter-spacing:-0.2px;color:#2e2e2e">25 (Form</div>
<div class="t lab" style="left:136.5px;top:547.1px;width:100px;text-align:center;font-size:10.2px;letter-spacing:-0.2px;color:#2e2e2e">Validation</div>
<svg style="left:240.5px;top:484.5px" width="76" height="48"><rect x="0" y="0" width="76" height="46" fill="#777777"/><rect x="1.8" y="1.9" width="4.8" height="4" fill="#fff"/><rect x="69.4" y="1.9" width="4.8" height="4" fill="#fff"/><rect x="1.8" y="9.4" width="4.8" height="4" fill="#fff"/><rect x="69.4" y="9.4" width="4.8" height="4" fill="#fff"/><rect x="1.8" y="16.9" width="4.8" height="4" fill="#fff"/><rect x="69.4" y="16.9" width="4.8" height="4" fill="#fff"/><rect x="1.8" y="24.4" width="4.8" height="4" fill="#fff"/><rect x="69.4" y="24.4" width="4.8" height="4" fill="#fff"/><rect x="1.8" y="31.9" width="4.8" height="4" fill="#fff"/><rect x="69.4" y="31.9" width="4.8" height="4" fill="#fff"/><rect x="1.8" y="39.4" width="4.8" height="4" fill="#fff"/><rect x="69.4" y="39.4" width="4.8" height="4" fill="#fff"/><rect x="8" y="0.5" width="60" height="45" fill="#111"/><rect x="9" y="2.5" width="58" height="1.2" fill="#ddd"/><rect x="9" y="3.7" width="1.6" height="41" fill="#cfcfcf"/><rect x="10.6" y="3.7" width="56.4" height="41" fill="#2a2a27"/><rect x="13" y="7" width="30" height="0.9" fill="#55544c"/><rect x="19" y="10" width="23" height="0.9" fill="#55544c"/><rect x="19" y="13" width="18" height="0.9" fill="#55544c"/><rect x="16" y="16" width="10" height="0.9" fill="#55544c"/><rect x="16" y="19" width="28" height="0.9" fill="#55544c"/><rect x="19" y="22" width="26" height="0.9" fill="#55544c"/><rect x="16" y="25" width="28" height="0.9" fill="#55544c"/><rect x="13" y="28" width="11" height="0.9" fill="#55544c"/><rect x="19" y="31" width="13" height="0.9" fill="#55544c"/><rect x="13" y="34" width="8" height="0.9" fill="#55544c"/><rect x="13" y="37" width="9" height="0.9" fill="#55544c"/><rect x="16" y="40" width="22" height="0.9" fill="#55544c"/><rect x="39.2" y="14.1" width="18" height="11.4" fill="#f2f2f2"/><rect x="60" y="32" width="16" height="14.5" fill="#9fbcd2"/><rect x="73" y="32" width="3" height="14.5" fill="#bcd8ee"/><circle cx="66.3" cy="39.2" r="5.6" fill="#d9833a"/><circle cx="66.3" cy="38.8" r="4.3" fill="#f2b070"/><path d="M64.6 36l4.6 3.1-4.6 3.1z" fill="#fff"/></svg>
<div class="t lab" style="left:229.5px;top:534.9px;width:100px;text-align:center;font-size:10.2px;letter-spacing:-0.2px;color:#2e2e2e">26 (Using</div>
<div class="t lab" style="left:229.5px;top:547.1px;width:100px;text-align:center;font-size:10.2px;letter-spacing:-0.2px;color:#2e2e2e">Sessions)</div>

<!-- scrollbar -->
<div class="a" style="left:330px;top:155px;width:13px;height:405px;background:#f0f0f0"></div>
<div class="a" style="left:330px;top:168.5px;width:13px;height:215.5px;background:#cdcdcd"></div>
<svg style="left:0;top:0" width="345" height="581">
  <path d="M333.5 164.5l3-3 3 3" fill="none" stroke="#555" stroke-width="1.3"/>
  <path d="M333.5 553l3 3 3-3" fill="none" stroke="#555" stroke-width="1.3"/>
</svg>
<!-- video -->
<div class="a" style="left:357px;top:172px;width:441.5px;height:331px;background:#000"></div>
<div class="a" style="left:357px;top:212.8px;width:441.5px;height:8px;background:#5b9bcf"></div>
<div class="a" style="left:783.5px;top:212.8px;width:15px;height:8px;background:#d9534a"></div>
<div class="a" style="left:359.5px;top:215px;width:4px;height:3px;background:#4a6f90"></div>
<div class="a" style="left:472px;top:215px;width:212px;height:3.5px;background:repeating-linear-gradient(90deg,#4a7eaa 0 5px,#5790bf 5px 7px,#4e84b0 7px 11px,#5a93c2 11px 13px)"></div>
<div class="a" style="left:767.5px;top:216.5px;width:3px;height:1.5px;background:#3f6b95"></div>
<div class="a" style="left:776px;top:214.5px;width:4px;height:3.5px;background:#3f6b9f"></div>
<div class="a" style="left:357px;top:220.8px;width:441.5px;height:7.3px;background:#f3f3f3"></div>
<div class="a" style="left:357px;top:228px;width:62px;height:233.3px;background:#e6e6e6"></div>
<div class="a" style="left:419px;top:228px;width:379.5px;height:233.3px;background:#272822"></div>
<div class="a" style="left:419px;top:228px;width:379.5px;height:11.3px;background:#1d1e1a"></div>
<div class="a" style="left:423.5px;top:229.5px;width:56.5px;height:9.8px;background:#2f302a"></div>
<div class="a" style="left:419px;top:320.8px;width:18px;height:4.2px;background:#4a4a40"></div><div class="a" style="left:561.5px;top:316px;width:0.8px;height:5px;background:#bbb"></div>
<div class="a" style="left:759px;top:240px;width:34.6px;height:23.8px;background:#3a3a34"></div>
<div class="a" style="left:793.6px;top:228px;width:5px;height:233.3px;background:#2a2a26"></div><div class="a" style="left:794px;top:240px;width:4px;height:157px;background:#3a3a35"></div><div class="a" style="left:768px;top:458.5px;width:1.5px;height:1.5px;background:#ddd"></div>
<svg style="left:0;top:0" width="810" height="581">
 <g font-family="Liberation Mono" font-size="5.22" >
  <text x="360" y="226.3" font-family="Liberation Sans" font-size="4.4" fill="#555" xml:space="preserve">File  Edit  Selection  Find  View  Goto  Tools  Project  Preferences  Help</text>
  <text x="429" y="236" font-family="Liberation Sans" font-size="4.2" fill="#ccc">login_view.php</text>
  <text x="472" y="236" font-size="4.2" fill="#999">×</text>
  <g fill="#8f908a">
   <text x="428" y="245.8">1</text><text x="428" y="252.4">2</text><text x="428" y="259">3</text><text x="428" y="265.5">4</text>
   <text x="428" y="272.1">5</text><text x="428" y="278.7">6</text><text x="428" y="285.2">7</text><text x="428" y="291.8">8</text>
   <text x="428" y="298.4">9</text><text x="426" y="305">10</text><text x="426" y="311.5">11</text><text x="426" y="318.1">12</text>
   <text x="426" y="324.7">13</text><text x="426" y="331.2">14</text><text x="426" y="337.8">15</text><text x="426" y="344.4">16</text>
  </g>
  <text x="438.3" y="245.8" xml:space="preserve"><tspan fill="#f8f8f2">&lt;</tspan><tspan fill="#f92672">html</tspan><tspan fill="#f8f8f2">&gt;</tspan></text>
  <text x="450.3" y="252.4"><tspan fill="#f8f8f2">&lt;</tspan><tspan fill="#f92672">head</tspan><tspan fill="#f8f8f2">&gt;</tspan></text>
  <text x="462.3" y="259" xml:space="preserve"><tspan fill="#f8f8f2">&lt;</tspan><tspan fill="#f92672">title</tspan><tspan fill="#f8f8f2">&gt;Login Panel&lt;/</tspan><tspan fill="#f92672">title</tspan><tspan fill="#f8f8f2">&gt;</tspan></text>
  <text x="462.3" y="265.5" xml:space="preserve"><tspan fill="#f8f8f2">&lt;</tspan><tspan fill="#f92672">link</tspan> <tspan fill="#a6e22e">rel</tspan><tspan fill="#f8f8f2">=</tspan><tspan fill="#e6db74">"stylesheet"</tspan> <tspan fill="#a6e22e">href</tspan><tspan fill="#f8f8f2">="&lt;?php </tspan><tspan fill="#66d9ef">echo</tspan><tspan fill="#f8f8f2"> base_url();?&gt;assets/css/bootstrap.css"&gt;</tspan></text>
  <text x="462.3" y="272.1" xml:space="preserve"><tspan fill="#f8f8f2">&lt;</tspan><tspan fill="#f92672">script</tspan> <tspan fill="#a6e22e">src</tspan><tspan fill="#e6db74">="&lt;?php </tspan><tspan fill="#66d9ef">echo</tspan><tspan fill="#f8f8f2"> base_url();?&gt;assets/js/jquery.js"&gt;&lt;/</tspan><tspan fill="#f92672">script</tspan><tspan fill="#f8f8f2">&gt;</tspan></text>
  <text x="462.3" y="278.7" xml:space="preserve"><tspan fill="#f8f8f2">&lt;</tspan><tspan fill="#f92672">script</tspan> <tspan fill="#a6e22e">src</tspan><tspan fill="#e6db74">="&lt;?php </tspan><tspan fill="#66d9ef">echo</tspan><tspan fill="#f8f8f2"> base_url();?&gt;assets/js/bootstrap.js"&gt;&lt;/</tspan><tspan fill="#f92672">script</tspan><tspan fill="#f8f8f2">&gt;</tspan></text>
  <text x="450.3" y="285.2"><tspan fill="#f8f8f2">&lt;/</tspan><tspan fill="#f92672">head</tspan><tspan fill="#f8f8f2">&gt;</tspan></text>
  <text x="450.3" y="291.8"><tspan fill="#f8f8f2">&lt;</tspan><tspan fill="#f92672">body</tspan><tspan fill="#f8f8f2">&gt;</tspan></text>
  <text x="462.3" y="298.4" xml:space="preserve"><tspan fill="#f8f8f2">&lt;</tspan><tspan fill="#f92672">c</tspan><tspan fill="#f8f8f2">&gt;This is the Login Panel&lt;/</tspan><tspan fill="#f92672">c</tspan><tspan fill="#f8f8f2">&gt;</tspan></text>
  <text x="462.3" y="305" xml:space="preserve" fill="#f8f8f2">&lt;?php $attributes <tspan fill="#f92672">=</tspan> <tspan fill="#66d9ef">array</tspan>(<tspan fill="#e6db74">'class'</tspan> <tspan fill="#f92672">=&gt;</tspan> <tspan fill="#e6db74">'form-horizontal'</tspan>); ?&gt;</text>
  <text x="462.3" y="311.5" fill="#f8f8f2">&lt;?php</text>
  <text x="474.3" y="318.1" xml:space="preserve" fill="#f8f8f2"><tspan fill="#66d9ef">echo</tspan> form_open(<tspan fill="#e6db74">'Login_view'</tspan>, $attributes);</text>
  <text x="474.3" y="331.2" xml:space="preserve" fill="#f8f8f2"><tspan fill="#66d9ef">echo</tspan> form_close(); ?&gt;</text>
  <text x="450.3" y="337.8"><tspan fill="#f8f8f2">&lt;/</tspan><tspan fill="#f92672">body</tspan><tspan fill="#f8f8f2">&gt;</tspan></text>
  <text x="438.3" y="344.4"><tspan fill="#f8f8f2">&lt;/</tspan><tspan fill="#f92672">html</tspan><tspan fill="#f8f8f2">&gt;</tspan></text>
 </g>
 <g font-family="Liberation Sans" font-size="4.3" fill="#6a6a6a">
  <text x="360" y="232.5" font-size="3.6" fill="#888">FOLDERS</text>
  <text x="362" y="239">▾ ci</text>
  <text x="366" y="245.5">▾ application</text>
  <text x="370" y="252">▸ cache</text><text x="370" y="258.5">▸ config</text><text x="370" y="265">▸ controllers</text>
  <text x="370" y="271.5">▸ core</text><text x="370" y="278">▸ helpers</text><text x="370" y="284.5">▸ hooks</text>
  <text x="370" y="291">▸ language</text><text x="370" y="297.5">▸ libraries</text><text x="370" y="304">▸ logs</text>
  <text x="370" y="310.5">▸ models</text><text x="370" y="317">▸ third_party</text><text x="370" y="323.5">▾ views</text>
  <text x="374" y="330">▸ errors</text><text x="378" y="336.5">display.php</text><text x="378" y="343">index.html</text>
 </g>
</svg>
<div class="a" style="left:357px;top:345px;width:62px;height:6.5px;background:#a8a8a8"></div>
<svg style="left:0;top:0" width="810" height="581">
 <g font-family="Liberation Sans" font-size="4.3" fill="#6a6a6a">
  <text x="378" y="349.8" fill="#fff">login_view.php</text>
  <text x="378" y="356">view_view.php</text><text x="378" y="362.5">welcome_message.php</text>
  <text x="374" y="369">.htaccess</text><text x="370" y="375.5">index.html</text>
  <text x="366" y="382">▸ assets</text><text x="366" y="388.5">▸ system</text><text x="366" y="395">▾ user_guide</text>
  <text x="370" y="401.5">.gitignore</text><text x="370" y="408">composer.json</text><text x="370" y="414.5">contributing.md</text>
  <text x="370" y="421">index.php</text><text x="370" y="427.5">license.txt</text><text x="370" y="434">readme.rst</text>
 </g>
 <g>
  <rect x="761" y="242" width="14" height="0.8" fill="#6b6a60"/><rect x="763" y="244" width="18" height="0.8" fill="#6b6a60"/>
  <rect x="765" y="246" width="26" height="0.8" fill="#6b6a60"/><rect x="765" y="248" width="22" height="0.8" fill="#6b6a60"/>
  <rect x="763" y="252" width="8" height="0.8" fill="#6b6a60"/><rect x="765" y="254" width="16" height="0.8" fill="#6b6a60"/>
 </g>
</svg>
<!-- progress -->
<div class="a" style="left:368px;top:506px;width:418px;height:3.6px;background:#f4f4f4;border:1px solid #d8d8d8;box-sizing:border-box;border-radius:2px"></div>
<div class="a" style="left:368px;top:506.5px;width:20px;height:2.6px;background:#3f6fc8;border-radius:1px"></div>
<!-- controls -->
<div class="a" style="left:519.5px;top:518px;width:115px;height:18.5px;border:1px solid #c9c9c9;border-radius:9.5px;box-sizing:border-box;background:linear-gradient(#fdfdfd,#eef0f2)"></div>
<svg style="left:0;top:0" width="810" height="581">
 <defs>
  <linearGradient id="pg" x1="0" y1="0" x2="0" y2="1">
   <stop offset="0" stop-color="#6f9cf0"/><stop offset="0.45" stop-color="#1f56d0"/><stop offset="0.6" stop-color="#0a2f9a"/><stop offset="1" stop-color="#2aa0f8"/>
  </linearGradient>
 </defs>
 <rect x="540.2" y="524" width="7.5" height="6.6" fill="#1f4fa8" rx="0.8"/>
 <circle cx="577" cy="526.6" r="12.8" fill="#c5cdd8"/><circle cx="577" cy="526.6" r="12" fill="#2a4a90"/>
 <circle cx="577" cy="526.6" r="11.2" fill="url(#pg)"/>
 <rect x="573.2" y="520.8" width="2.4" height="11" fill="#dfe8f8" rx="1"/>
 <rect x="578.4" y="520.8" width="2.4" height="11" fill="#dfe8f8" rx="1"/>
 <rect x="606.5" y="522.8" width="8.6" height="8.6" fill="#fff" stroke="#2a4f8a" stroke-width="1"/>
 <path d="M608.8 529.2l4-4M610.2 525.2h2.6v2.6" fill="none" stroke="#2a4f8a" stroke-width="1.1"/>
</svg>
<!-- status bar -->
<div class="a" style="left:0;top:560px;width:810px;height:21px;background:#fff"></div>
<div class="t" style="left:12px;top:565px;color:#333">12 items</div><div class="a" style="left:57.5px;top:564px;width:1px;height:14px;background:#eeeeee"></div>
<div class="t" style="left:66.5px;top:565px;color:#333">1 item selected&nbsp;&nbsp;63.3 MB</div>
<svg style="left:0;top:0" width="810" height="581">
 <path d="M772.5 565.5h3v2h-3zM772.5 569.5h3v2h-3zM772.5 573.5h3v2h-3z" fill="none" stroke="#777" stroke-width="0.7"/>
 <path d="M777 566.5h3M781 566.5h4M777 570.5h3M781 570.5h4M777 574.5h3M781 574.5h4" stroke="#777" stroke-width="0.8"/>
 <rect x="788" y="561.5" width="17.5" height="18.5" fill="#cce8ff" stroke="#7fb7e8"/>
 <rect x="791.5" y="566" width="10.5" height="8.5" fill="#fff" stroke="#666" stroke-width="0.8"/>
 <path d="M793 572.5l3-3 4 3z" fill="#333"/>
</svg>


<!-- STATUS -->

</body></html>
